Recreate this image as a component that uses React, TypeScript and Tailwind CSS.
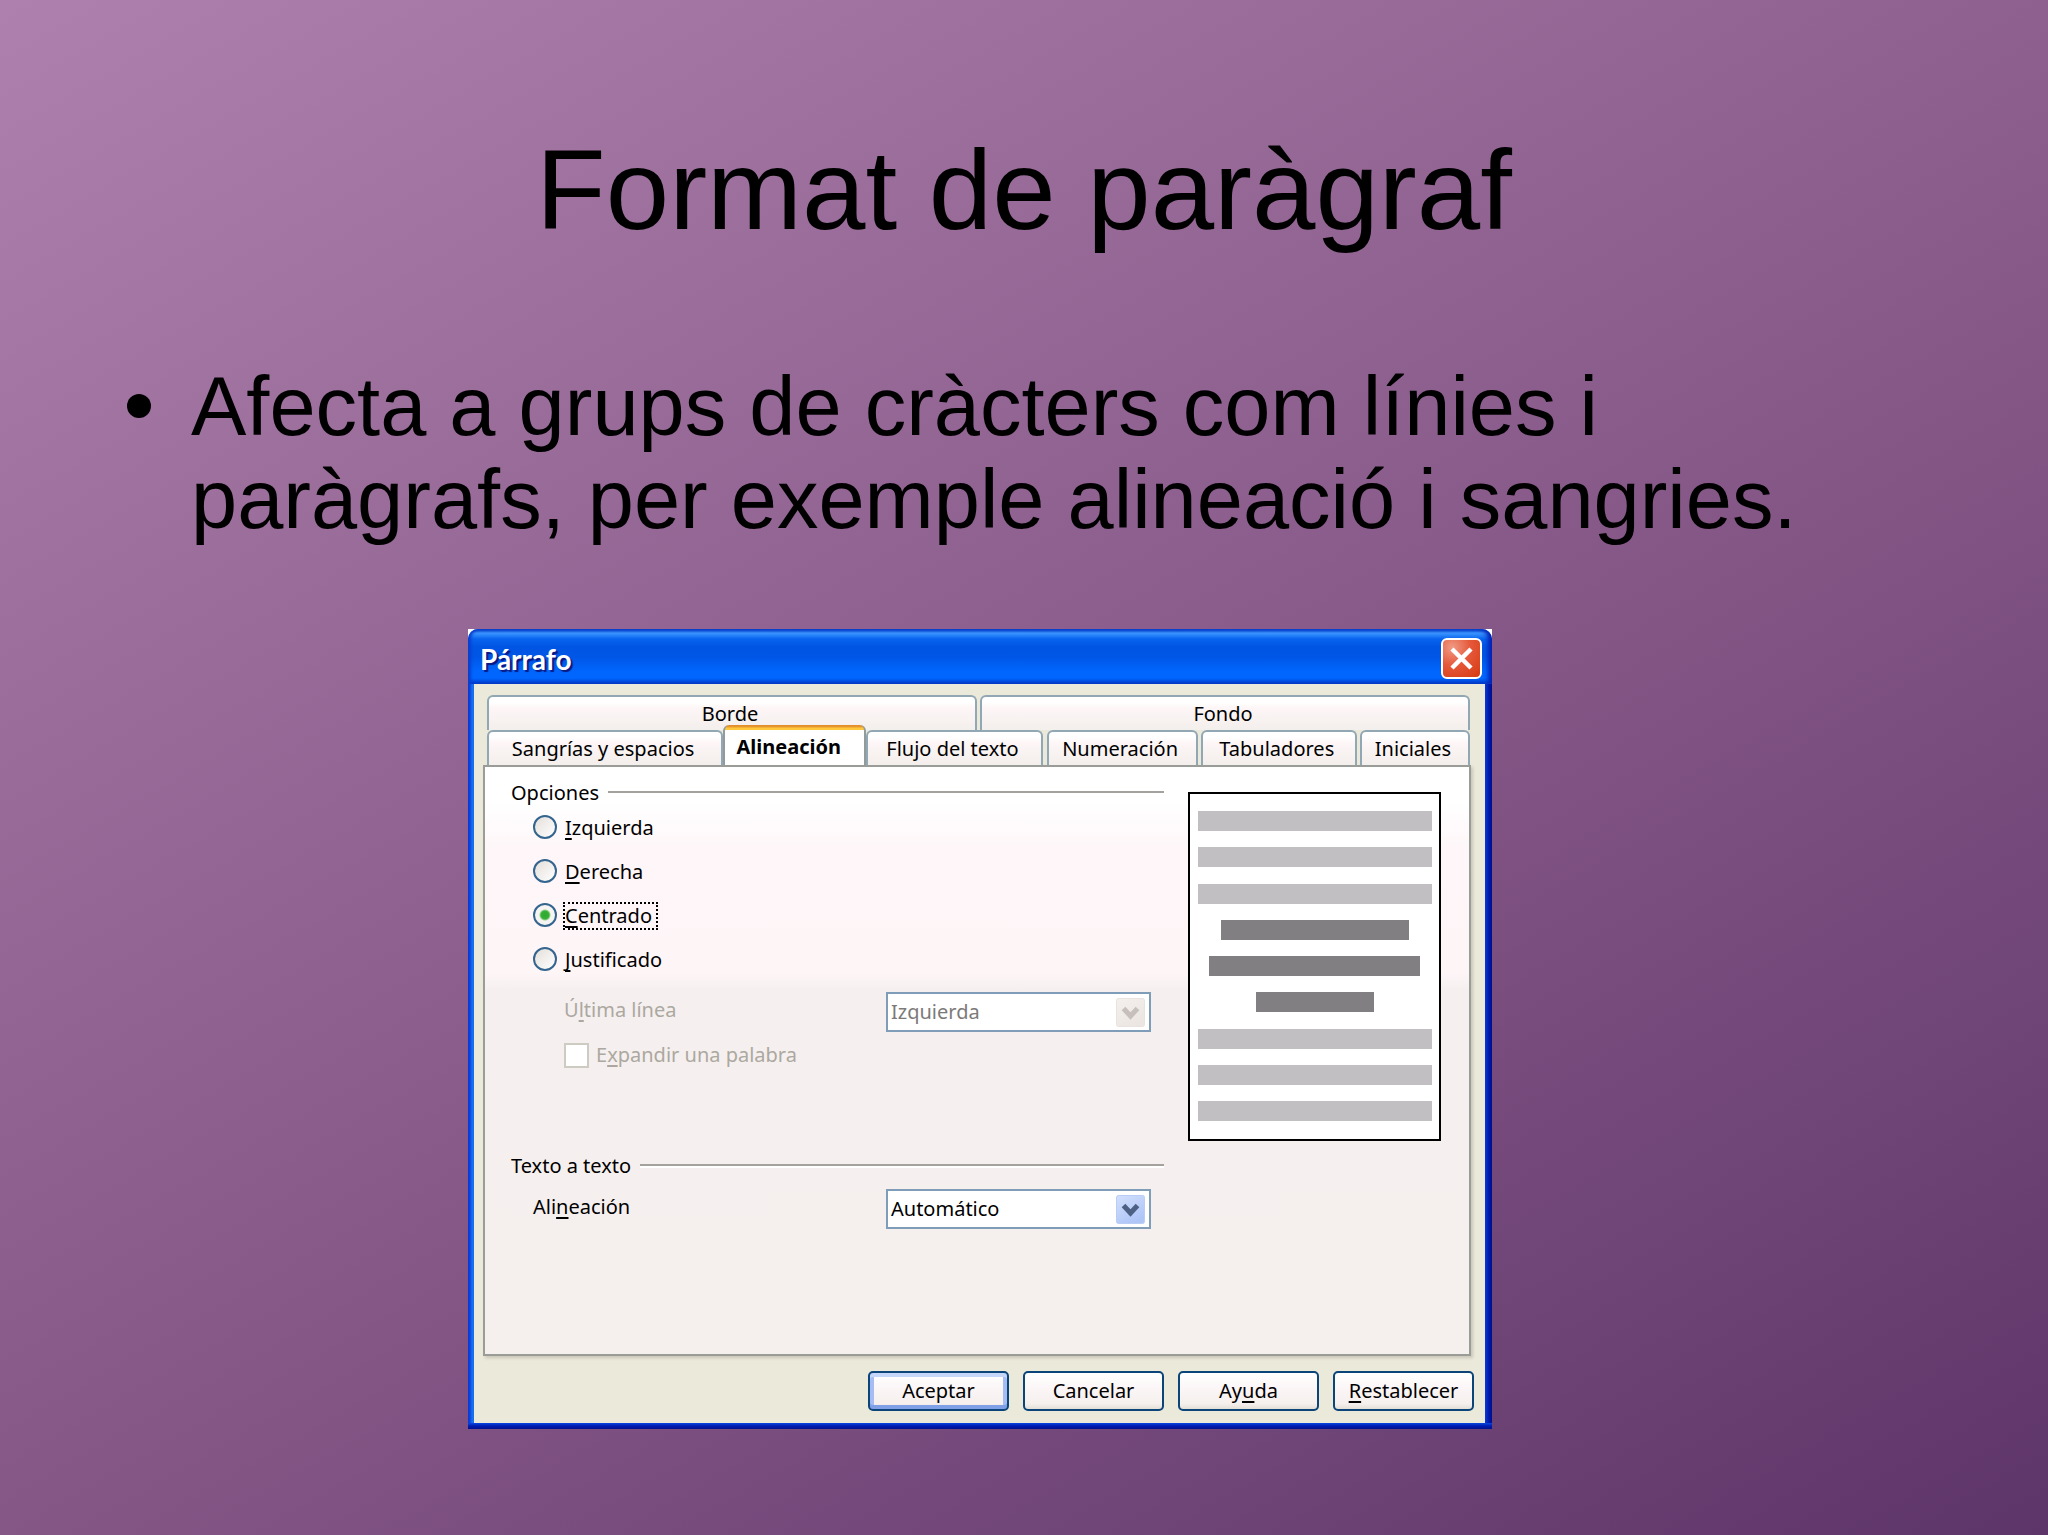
import { useState } from "react";
import type { ReactNode } from "react";

// ── data ──────────────────────────────────────────────────────────────────────

const TOP_TABS = ["Borde", "Fondo"];

const TABS: { name: string; width: string }[] = [
  { name: "Sangrías y espacios", width: "w-[236px]" },
  { name: "Alineación", width: "w-[143px]" },
  { name: "Flujo del texto", width: "w-[176px] mr-1" },
  { name: "Numeración", width: "w-[151px] mr-[3px]" },
  { name: "Tabuladores", width: "w-[156px] mr-[3px]" },
  { name: "Iniciales", width: "w-[110px]" },
];

const OPTIONS = ["Izquierda", "Derecha", "Centrado", "Justificado"];

const PREVIEW_BARS = [
  "w-[234px] bg-[#c1bfc1]",
  "w-[234px] bg-[#c1bfc1]",
  "w-[234px] bg-[#c1bfc1]",
  "w-[188px] bg-[#817f81]",
  "w-[211px] bg-[#817f81]",
  "w-[118px] bg-[#817f81]",
  "w-[234px] bg-[#c1bfc1]",
  "w-[234px] bg-[#c1bfc1]",
  "w-[234px] bg-[#c1bfc1]",
];

// ── small pieces ──────────────────────────────────────────────────────────────

// Text with the access key underlined
function Mnemonic({ text, at = 0 }: { text: string; at?: number }) {
  return (
    <>
      {text.slice(0, at)}
      <span className="underline decoration-2 underline-offset-[3px] [text-decoration-skip-ink:none]">
        {text[at]}
      </span>
      {text.slice(at + 1)}
    </>
  );
}

function SectionTitle({ children }: { children: ReactNode }) {
  return (
    <div className="flex items-center gap-[9px]">
      <h2>{children}</h2>
      <div className="h-1 flex-1 border-t-2 border-[#a5a29d] bg-white" />
    </div>
  );
}

function Tab({
  name,
  active,
  width,
  onSelect,
}: {
  name: string;
  active: boolean;
  width: string;
  onSelect: () => void;
}) {
  const look = active
    ? "relative z-10 h-10 -mt-[5px] -mb-0.5 pt-1 pr-3 font-bold bg-white border-x-2 border-[#919b9c] rounded-t-md bg-[linear-gradient(#e08a2c_0px,#e89a30_2px,#ffc83c_3px,#ffc83c_5px,#ffffff_5px)]"
    : "h-[35px] pr-1 border-x-2 border-t-2 border-[#91a7b4] rounded-t-md bg-[linear-gradient(#ffffff_0%,#ffffff_15%,#fdf5f6_35%,#f3efec_100%)]";
  return (
    <button
      role="tab"
      aria-selected={active}
      onClick={onSelect}
      className={`grow whitespace-nowrap ${width} ${look}`}
    >
      {name}
    </button>
  );
}

function Select({
  id,
  options,
  disabled = false,
}: {
  id: string;
  options: string[];
  disabled?: boolean;
}) {
  return (
    <div className="relative w-[265px]">
      <select
        id={id}
        disabled={disabled}
        className="block w-full h-10 pl-[3px] appearance-none bg-white border-2 border-[#7f9db9] text-black disabled:text-[#7c7a78] disabled:opacity-100"
      >
        {options.map((o) => (
          <option key={o}>{o}</option>
        ))}
      </select>
      <svg
        viewBox="0 0 29 29"
        className="absolute right-1.5 top-1.5 size-[29px] pointer-events-none"
      >
        <defs>
          <linearGradient id={`${id}-face`} x1="0" y1="0" x2="0.6" y2="1">
            <stop offset="0" stopColor={disabled ? "#f4f0ed" : "#d3e0fd"} />
            <stop offset="1" stopColor={disabled ? "#ebe6e2" : "#aec5f8"} />
          </linearGradient>
        </defs>
        <rect
          x="0.5"
          y="0.5"
          width="28"
          height="28"
          rx="2"
          fill={`url(#${id}-face)`}
          stroke={disabled ? "#e8e3de" : "#b9cdf7"}
        />
        <path
          d="M7.5 10.5 L14.5 18 L21.5 10.5"
          fill="none"
          stroke={disabled ? "#c6bfbc" : "#4d6185"}
          strokeWidth="5"
        />
      </svg>
    </div>
  );
}

function DialogButton({ children, primary = false }: { children: ReactNode; primary?: boolean }) {
  return (
    <button
      className={`w-[141px] h-10 rounded-[5px] border-2 border-[#0b4478] bg-[linear-gradient(#ffffff_0%,#fbf5f6_45%,#f5f0ee_85%,#e3dfd6_100%)] ${
        primary
          ? "shadow-[inset_0_4px_0_#c5d6fb,inset_0_-4px_0_#7f9fe6,inset_4px_0_0_#a5bdf3,inset_-4px_0_0_#a5bdf3]"
          : ""
      }`}
    >
      {children}
    </button>
  );
}

// ── dialog ────────────────────────────────────────────────────────────────────

function ParagraphDialog() {
  const [tab, setTab] = useState("Alineación");
  const [align, setAlign] = useState("Centrado");

  return (
    <section
      aria-label="Párrafo"
      className="w-1/2 mt-[83px] ml-[468px] bg-white text-[20px] leading-6 text-black font-['Noto_Sans','Open_Sans',sans-serif]"
    >
      {/* title bar */}
      <header className="h-[55px] pl-3 pr-[10px] flex items-center justify-between rounded-t-[10px] bg-[linear-gradient(#0a50cf_0px,#1a68e4_2px,#3d96ff_4px,#2a86fa_6px,#0863ee_10px,#0055e3_18px,#0056e6_28px,#0066fd_42px,#0066ff_49px,#0048d4_54px)] shadow-[inset_3px_0_3px_#0a3fd0,inset_-4px_0_4px_#0622b4]">
        <h2 className="pt-1 text-[28px] leading-8 font-bold text-white font-['Lato',sans-serif] [text-shadow:2px_2px_1px_#0a1883]">
          Párrafo
        </h2>
        <button
          aria-label="Cerrar"
          className="size-[41px] mt-1 flex items-center justify-center rounded-md border-2 border-white bg-[radial-gradient(circle_at_25%_20%,#f09a84_0%,#e5583a_45%,#d63a10_100%)]"
        >
          <svg viewBox="0 0 37 37" className="size-[37px]">
            <path d="M9 9 L28 28 M28 9 L9 28" stroke="#fff" strokeWidth="4.5" fill="none" />
          </svg>
        </button>
      </header>

      {/* window frame */}
      <div className="pl-1.5 pr-[7px] pb-1.5 bg-[linear-gradient(to_top,#00128f_0px,#001cb0_3px,#0a48e0_6px,transparent_6px),linear-gradient(to_right,#0a35d4_0px,#0a45dc_2px,#176ff0_4px,#176ff0_6px,transparent_6px),linear-gradient(to_left,#00108c_0px,#0018a8_3px,#0a38d8_7px,transparent_7px)]">
        <div className="bg-[#ebe9da] pt-[11px]">
          <div className="pl-[9px] pr-[14px]">
            {/* tab rows */}
            <div role="tablist" className="pl-1 pr-px">
              <div className="flex gap-[3px]">
                {TOP_TABS.map((name) => (
                  <Tab key={name} name={name} width="w-0" active={tab === name} onSelect={() => setTab(name)} />
                ))}
              </div>
              <div className="flex">
                {TABS.map((t) => (
                  <Tab
                    key={t.name}
                    name={t.name}
                    width={t.width}
                    active={tab === t.name}
                    onSelect={() => setTab(t.name)}
                  />
                ))}
              </div>
            </div>

            {/* tab page */}
            <div
              role="tabpanel"
              className="flex gap-6 pl-[26px] pr-[28px] pt-3.5 pb-[125px] border-2 border-[#9a9c98] bg-[linear-gradient(#ffffff_0%,#ffffff_6%,#fef6f8_14%,#fef5f7_35%,#f5f0ef_38%,#f5f0ee_100%)] shadow-[2px_2px_3px_#c9c6b8]"
            >
              <div className="flex-1">
                <SectionTitle>Opciones</SectionTitle>

                <div role="radiogroup" aria-label="Opciones" className="mt-[11px] pl-[22px] flex flex-col gap-5">
                  {OPTIONS.map((o) => (
                    <label key={o} className="h-6 flex items-center gap-2 w-fit">
                      <input
                        type="radio"
                        name="align"
                        checked={align === o}
                        onChange={() => setAlign(o)}
                        className="appearance-none size-6 shrink-0 mb-0.5 rounded-full border-2 border-[#34658f] bg-[linear-gradient(135deg,#e4dfda,#ffffff)] checked:bg-[radial-gradient(circle,#2fa82f_0px,#35b035_4px,#f6f4f2_6px)]"
                      />
                      <span className={align === o ? "outline-2 outline-dotted outline-black pr-1" : ""}>
                        <Mnemonic text={o} />
                      </span>
                    </label>
                  ))}
                </div>

                <div className="mt-5 pl-[53px] pr-[13px] flex items-center justify-between text-[#aca8a0]">
                  <label htmlFor="last-line" className="pb-1">
                    <Mnemonic text="Última línea" at={1} />
                  </label>
                  <Select id="last-line" options={["Izquierda", "Centrado", "Justificado"]} disabled />
                </div>

                <label className="mt-[11px] ml-[53px] h-6 flex items-center gap-[7px] w-fit text-[#aca8a0]">
                  <input
                    type="checkbox"
                    disabled
                    className="appearance-none size-[25px] border-2 border-[#cdcbc2] bg-white"
                  />
                  <span>
                    <Mnemonic text="Expandir una palabra" at={1} />
                  </span>
                </label>

                <div className="mt-[87px]">
                  <SectionTitle>Texto a texto</SectionTitle>
                </div>
                <div className="mt-[11px] pl-[22px] pr-[13px] flex items-center justify-between">
                  <label htmlFor="text-align" className="pb-1">
                    <Mnemonic text="Alineación" at={3} />
                  </label>
                  <Select id="text-align" options={["Automático", "Línea de base", "Arriba", "Centro", "Abajo"]} />
                </div>
              </div>

              {/* paragraph preview */}
              <div className="w-[253px] h-[349px] mt-[11px] pt-[17px] pb-[18px] shrink-0 flex flex-col items-center justify-between bg-white border-2 border-black">
                {PREVIEW_BARS.map((bar, i) => (
                  <div key={i} className={`h-5 ${bar}`} />
                ))}
              </div>
            </div>
          </div>

          <footer className="flex justify-end gap-3.5 pt-[15px] pb-3 pr-[11px]">
            <DialogButton primary>Aceptar</DialogButton>
            <DialogButton>Cancelar</DialogButton>
            <DialogButton>
              <Mnemonic text="Ayuda" at={2} />
            </DialogButton>
            <DialogButton>
              <Mnemonic text="Restablecer" />
            </DialogButton>
          </footer>
        </div>
      </div>
    </section>
  );
}

// ── slide ─────────────────────────────────────────────────────────────────────

export default function App() {
  return (
    <main className="min-h-screen pt-[124px] text-black font-['Liberation_Sans',Arial,sans-serif] bg-[linear-gradient(150deg,#ad80ad_0%,#8b5d8c_48%,#5e3569_100%)]">
      <h1 className="text-center text-[114px] leading-[132px]">Format de paràgraf</h1>

      <ul className="mt-[104px] pl-[127px] pr-[100px]">
        <li className="flex gap-10 text-[83px] leading-[93px]">
          <span className="size-6 mt-[34px] shrink-0 rounded-full bg-black" />
          <p>Afecta a grups de cràcters com línies i paràgrafs, per exemple alineació i sangries.</p>
        </li>
      </ul>

      <ParagraphDialog />
    </main>
  );
}
